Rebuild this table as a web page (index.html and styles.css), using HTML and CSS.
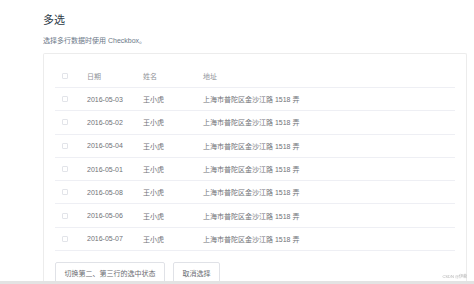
FILE: index.html
```html
<!DOCTYPE html>
<html lang="zh">
<head>
<meta charset="utf-8">
<link rel="stylesheet" href="styles.css">
</head>
<body>
<div class="page">
  <h3 class="title">多选</h3>
  <p class="desc">选择多行数据时使用 Checkbox。</p>
  <div class="card">
    <div class="table">
      <div class="row head">
        <div class="c-check"><span class="box"></span></div>
        <div class="c-date">日期</div>
        <div class="c-name">姓名</div>
        <div class="c-addr">地址</div>
      </div>
      <div class="row"><div class="c-check"><span class="box"></span></div><div class="c-date">2016-05-03</div><div class="c-name">王小虎</div><div class="c-addr">上海市普陀区金沙江路 1518 弄</div></div>
      <div class="row"><div class="c-check"><span class="box"></span></div><div class="c-date">2016-05-02</div><div class="c-name">王小虎</div><div class="c-addr">上海市普陀区金沙江路 1518 弄</div></div>
      <div class="row"><div class="c-check"><span class="box"></span></div><div class="c-date">2016-05-04</div><div class="c-name">王小虎</div><div class="c-addr">上海市普陀区金沙江路 1518 弄</div></div>
      <div class="row"><div class="c-check"><span class="box"></span></div><div class="c-date">2016-05-01</div><div class="c-name">王小虎</div><div class="c-addr">上海市普陀区金沙江路 1518 弄</div></div>
      <div class="row"><div class="c-check"><span class="box"></span></div><div class="c-date">2016-05-08</div><div class="c-name">王小虎</div><div class="c-addr">上海市普陀区金沙江路 1518 弄</div></div>
      <div class="row"><div class="c-check"><span class="box"></span></div><div class="c-date">2016-05-06</div><div class="c-name">王小虎</div><div class="c-addr">上海市普陀区金沙江路 1518 弄</div></div>
      <div class="row"><div class="c-check"><span class="box"></span></div><div class="c-date">2016-05-07</div><div class="c-name">王小虎</div><div class="c-addr">上海市普陀区金沙江路 1518 弄</div></div>
    </div>
    <div class="actions">
      <button class="btn">切换第二、第三行的选中状态</button>
      <button class="btn">取消选择</button>
    </div>
  </div>
</div>
<div class="watermark">CSDN @伊蓉</div>
<div class="bottombar"></div>
</body>
</html>
```

FILE: styles.css
```css
html, body {
  margin: 0;
  padding: 0;
  background: #fff;
  height: 284px;
  overflow: hidden;
}
body {
  font-family: "Liberation Sans", "Noto Sans CJK SC", sans-serif;
}
.page {
  height: 284px;
  box-sizing: border-box;
  padding: 12px 7px 0 43px;
  display: flex;
  flex-direction: column;
}
.title {
  margin: 0;
  font-size: 11px;
  line-height: 16px;
  font-weight: 400;
  color: #2c3a47;
}
.desc {
  margin: 8px 0 0;
  font-size: 7px;
  line-height: 10px;
  color: #6b7888;
}
.card {
  flex: 1;
  margin-top: 7px;
  border: 1px solid #ececec;
  border-bottom: none;
  border-radius: 2px 2px 0 0;
  padding: 11px 11px 0 11px;
  overflow: hidden;
}
.table {
  display: flex;
  flex-direction: column;
  font-size: 7px;
  color: #707277;
}
.row {
  display: flex;
  align-items: center;
  height: 23.3px;
  box-sizing: border-box;
  border-bottom: 1px solid #eeeff4;
}
.row.head {
  height: 23px;
  color: #909399;
}
.c-check {
  width: 32px;
  padding-left: 7px;
  box-sizing: border-box;
  display: flex;
  align-items: center;
}
.box {
  display: block;
  width: 6px;
  height: 6px;
  border: 1px solid #e2e4e9;
  border-radius: 1px;
  box-sizing: border-box;
}
.c-date { width: 56px; }
.c-name { width: 60px; }
.c-addr { flex: 1; }
.actions {
  display: flex;
  gap: 8px;
  margin-top: 11px;
}
.btn {
  font-family: "Liberation Sans", "Noto Sans CJK SC", sans-serif;
  font-size: 7px;
  color: #6a6c71;
  background: #fff;
  border: 1px solid #e0e2e7;
  border-radius: 2px;
  height: 22px;
  padding: 0 8.5px;
}
.watermark {
  position: fixed;
  right: 7px;
  bottom: 5px;
  font-size: 4px;
  color: #b0b0b0;
}
.bottombar {
  position: fixed;
  left: 0;
  right: 0;
  bottom: 0;
  height: 3px;
  background: #e3e3e3;
}
```
